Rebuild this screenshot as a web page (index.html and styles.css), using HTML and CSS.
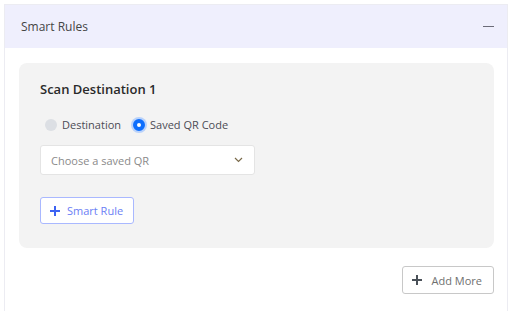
FILE: index.html
```html
<!DOCTYPE html>
<html>
    <head>
    <title>Smart Rules</title>
    <link rel="stylesheet" href="styles.css">
    </head>
    <body>
        <div class="panel">
            <div class="panelHead">
                <span class="panelTitle">Smart Rules</span>
                <span class="collapse"></span>
            </div>
            <div class="panelBody">
                <div class="destCard">
                    <h4 class="destTitle">Scan Destination 1</h4>

                    <div class="radioRow">
                        <label class="radioItem"><span class="radio"></span> Destination</label>
                        <label class="radioItem"><span class="radio checked"></span> Saved QR Code</label>
                    </div>

                    <div class="qrSelect">
                        <span class="placeholder">Choose a saved QR</span>
                        <svg class="chevron" width="9" height="6" viewBox="0 0 9 6">
                            <path d="M1 1l3.5 3.5 3.5-3.5" fill="none" stroke="#7a6a4a" stroke-width="1.2"/>
                        </svg>
                    </div>

                    <button class="ruleButton"><span class="plus bluePlus"></span>Smart Rule</button>
                </div>

                <div class="footer">
                    <button class="moreButton"><span class="plus grayPlus"></span>Add More</button>
                </div>
            </div>
        </div>
    </body>
</html>
```
FILE: styles.css
```css
body{
    margin: 0;
    padding: 4px 4px 0 4px;
    font-family: "Open Sans", "Noto Sans", sans-serif;
    background-color: #ffffff;
}
.panel{
    border: 1px solid #ececf2;
    border-bottom: none;
    height: 320px;
}
.panelHead{
    height: 43px;
    background-color: #efeffd;
    display: flex;
    align-items: center;
    justify-content: space-between;
    padding: 0 13px 0 16px;
}
.panelTitle{
    font-size: 12px;
    color: #454545;
}
.collapse{
    width: 11px;
    height: 1px;
    background-color: #6b6b78;
}
.panelBody{
    padding: 15px 13px 0 14px;
}
.destCard{
    background-color: #f3f3f3;
    border-radius: 8px;
    padding: 17px 22px 24px 21px;
}
.destTitle{
    margin: 0;
    font-size: 13px;
    font-weight: 600;
    color: #2a2a2a;
    line-height: 18px;
}
.radioRow{
    display: flex;
    gap: 12px;
    margin-top: 19px;
    margin-left: 5px;
    height: 15px;
}
.radioItem{
    display: flex;
    align-items: center;
    gap: 5px;
    font-size: 11px;
    color: #4b4b55;
}
.radio{
    width: 12px;
    height: 12px;
    border-radius: 50%;
    background-color: #dcdfe4;
    box-sizing: border-box;
}
.radio.checked{
    background-color: #ffffff;
    border: 4px solid #0d6efd;
    box-shadow: 0 0 0 2px #b9d2fb;
}
.qrSelect{
    margin-top: 13px;
    width: 215px;
    height: 30px;
    box-sizing: border-box;
    background-color: #ffffff;
    border: 1px solid #e4e4e4;
    border-radius: 3px;
    display: flex;
    align-items: center;
    justify-content: space-between;
    padding: 0 11px 0 10px;
}
.placeholder{
    font-size: 11px;
    color: #8a8a8a;
}
.ruleButton{
    margin-top: 22px;
    display: flex;
    align-items: center;
    gap: 7px;
    height: 27px;
    padding: 0 10px 0 9px;
    background-color: #ffffff;
    border: 1px solid #a9b8ff;
    border-radius: 3px;
    font-family: "Open Sans", "Noto Sans", sans-serif;
    font-size: 11px;
    color: #6b80f5;
}
.plus{
    position: relative;
    width: 10px;
    height: 10px;
    display: inline-block;
}
.plus::before,
.plus::after{
    content: "";
    position: absolute;
    background-color: currentColor;
}
.plus::before{
    left: 4px;
    top: 0;
    width: 2px;
    height: 10px;
}
.plus::after{
    left: 0;
    top: 4px;
    width: 10px;
    height: 2px;
}
.bluePlus{
    color: #3d63f2;
}
.grayPlus{
    color: #4a5058;
}
.footer{
    display: flex;
    justify-content: flex-end;
    margin-top: 18px;
}
.moreButton{
    display: flex;
    align-items: center;
    gap: 10px;
    height: 28px;
    padding: 0 11px 0 9px;
    background-color: #ffffff;
    border: 1px solid #c8c8c8;
    border-radius: 3px;
    font-family: "Open Sans", "Noto Sans", sans-serif;
    font-size: 11px;
    color: #6f6f6f;
}
```
